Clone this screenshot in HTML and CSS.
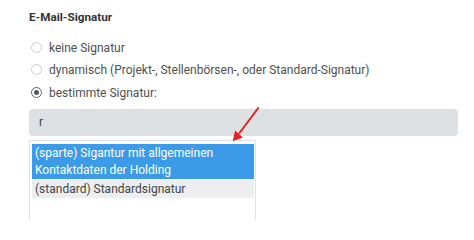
FILE: index.html
```html
<!DOCTYPE html>
<html lang="de">
<head>
<meta charset="utf-8">
<link rel="stylesheet" href="styles.css">
</head>
<body>
<div class="page">
  <div class="title">E-Mail-Signatur</div>
  <div class="options">
    <label class="opt"><span class="radio"></span><span class="lbl">keine Signatur</span></label>
    <label class="opt"><span class="radio"></span><span class="lbl">dynamisch (Projekt-, Stellenbörsen-, oder Standard-Signatur)</span></label>
    <label class="opt"><span class="radio checked"></span><span class="lbl">bestimmte Signatur:</span></label>
  </div>
  <div class="field">
    <div class="input">r</div>
    <div class="dropdown">
      <div class="item active">(sparte) Sigantur mit allgemeinen Kontaktdaten der Holding</div>
      <div class="item hover">(standard) Standardsignatur</div>
    </div>
    <svg class="arrow" width="40" height="40" viewBox="0 0 40 40">
      <line x1="32.3" y1="4" x2="13.5" y2="29" stroke="#e3211f" stroke-width="2" stroke-linecap="round"/>
      <polygon points="6.7,37.3 9.1,26.4 16.9,33.4" fill="#e3211f"/>
    </svg>
  </div>
</div>
</body>
</html>
```
FILE: styles.css
```css
html, body {
  margin: 0;
  padding: 0;
  background: #fff;
}
body {
  height: 220px;
  overflow: hidden;
  font-family: Roboto, "Liberation Sans", sans-serif;
  color: #4f4f4f;
  font-size: 12px;
}
.page {
  padding: 9px 16px 0 29px;
}
.title {
  font-weight: bold;
  color: #333;
  font-size: 11.7px;
  line-height: 16px;
}
.options {
  display: flex;
  flex-direction: column;
  margin-top: 11px;
}
.opt {
  display: flex;
  align-items: center;
  gap: 7px;
  height: 22.5px;
}
.lbl {
  line-height: 16px;
  margin-top: 1px;
}
.radio {
  box-sizing: border-box;
  width: 11px;
  height: 11px;
  border: 1px solid #c9ced2;
  border-radius: 50%;
  display: flex;
  align-items: center;
  justify-content: center;
  margin-left: 2px;
}
.radio.checked {
  border-color: #5a6976;
}
.radio.checked::after {
  content: "";
  width: 5px;
  height: 5px;
  border-radius: 50%;
  background: #4b5966;
}
.field {
  position: relative;
  margin-top: 5.5px;
}
.input {
  height: 27px;
  line-height: 27px;
  background: #dde1e4;
  border-radius: 4px;
  padding: 0 10px;
  color: #444;
}
.dropdown {
  box-sizing: border-box;
  margin-top: 4px;
  width: 227px;
  border: 1px solid #dfe2e5;
  border-bottom: none;
  padding: 3px 1px 40px 2px;
  background: #fff;
}
.item {
  padding: 0 4px 0 3px;
}
.item.active {
  padding-top: 1px;
  line-height: 17px;
  background: #3b9be9;
  color: #fff;
}
.item.hover {
  margin-top: 1px;
  background: #eceef0;
  color: #444;
  line-height: 18px;
}
.arrow {
  position: absolute;
  left: 197px;
  top: -5px;
  z-index: 2;
}
```
